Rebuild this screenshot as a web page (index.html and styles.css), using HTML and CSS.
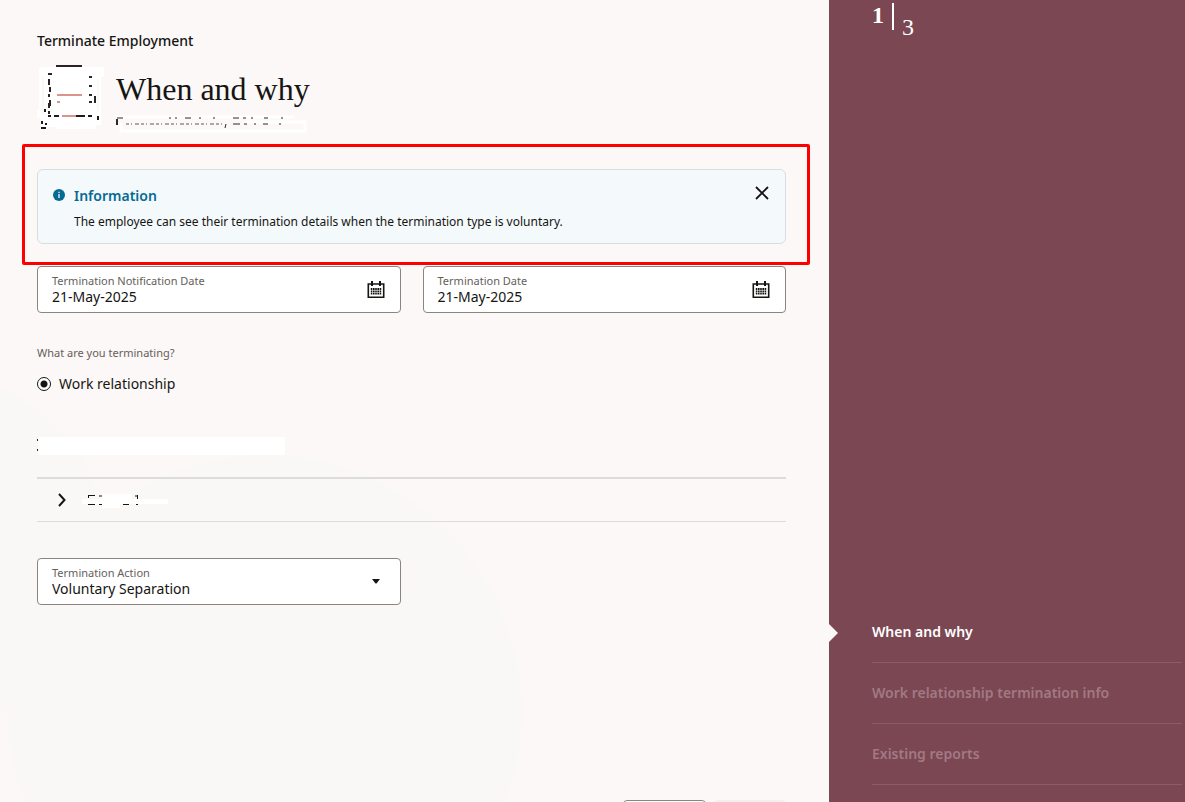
FILE: index.html
```html
<!DOCTYPE html>
<html lang="en">
<head>
  <meta charset="UTF-8">
  <meta name="viewport" content="width=device-width, initial-scale=1">
  <title>Terminate Employment</title>
  <link rel="stylesheet" href="styles.css">
</head>
<body>
  <div class="app">
    <main class="main">
      <header class="header">
        <p class="flow-name">Terminate Employment</p>
        <div class="title-row">
          <svg class="avatar" width="70" height="66" viewBox="0 0 70 66" aria-hidden="true">
            <path fill="#fff" d="M4 2h63v10h-3v48h-5v4H19v-2H4v-9H0v-8h2V4z"/>
            <path stroke="#fcf8f7" stroke-width="2" d="M6 12v38M61 14v32"/>
            <path stroke="#2b2426" stroke-width="2" d="M19 1h26"/>
            <path stroke="#2b2426" stroke-width="2" d="M11 9h4M12 14v6M13 22v5M12 29v3M13 35v6M12 38v5M12 46v3"/>
            <path stroke="#2b2426" stroke-width="2" d="M52 12h3M52 21h3M52 30h3M52 37h3M58 31v7"/>
            <path stroke="#d9958a" stroke-width="2" d="M20 30h25M20 37h3"/>
            <path stroke="#1f191b" stroke-width="2" d="M11 51h3M17 51h5"/>
            <path stroke="#d9958a" stroke-width="2" d="M25 51h14"/>
            <path stroke="#1f191b" stroke-width="2" d="M39 51h9M51 51h4M61 51v4M8 44v3M5 56v3M4 63h5M8 59h2"/>
          </svg>
          <div class="title-text">
            <h1>When and why</h1>
            <svg class="covered-name" width="192" height="20" viewBox="0 0 192 20" aria-hidden="true">
              <path fill="none" stroke="#fff" stroke-width="3" d="M0 3h178M5 9v8h184V8h-60"/>
              <path stroke="#2b2828" stroke-width="1" d="M1 4h6M53 4h2M60 3v2M69 4h6M84 3v2M97 4h2M117 4h6M127 4h3M135 4h2M148 4h4M166 3v2"/>
              <path stroke="#2b2828" stroke-width="2" d="M1 5v6"/>
              <path stroke="#5c5859" stroke-width="1" stroke-dasharray="3 2 1 3 4 2" d="M10 10h98"/>
              <path stroke="#2b2828" stroke-width="1" d="M110 10l-1 4M117 10h7M128 10h3M138 10h2M147 10h5M163 10h2"/>
            </svg>
          </div>
        </div>
      </header>

      <div class="highlight">
        <section class="banner">
          <svg class="info-icon" width="12" height="12" viewBox="0 0 12 12" aria-hidden="true">
            <circle cx="6" cy="6" r="6" fill="#066b93"/>
            <path stroke="#f4f9fc" stroke-width="1.3" d="M6 5v4M6 2.7v1.4"/>
          </svg>
          <div class="banner-body">
            <h2>Information</h2>
            <p>The employee can see their termination details when the termination type is voluntary.</p>
          </div>
          <button type="button" class="close" aria-label="Close">
            <svg width="14" height="14" viewBox="0 0 14 14">
              <path fill="none" stroke="#161513" stroke-width="1.8" d="M1 1l12 12M13 1L1 13"/>
            </svg>
          </button>
        </section>
      </div>

      <form class="form">
        <div class="fields">
          <div class="field">
            <div class="field-text">
              <label for="notify">Termination Notification Date</label>
              <input id="notify" type="text" value="21-May-2025">
            </div>
            <button type="button" class="calendar" aria-label="Select date">
              <svg width="18" height="18" viewBox="0 0 18 18">
                <path fill="none" stroke="#161513" stroke-width="1.6" d="M1.3 3h15.4v13.2H1.3z"/>
                <path stroke="#161513" stroke-width="2" d="M5 0v5M13 0v5"/>
                <path stroke="#161513" stroke-width="1.8" stroke-dasharray="1.6 .6" d="M3.8 8h10.6M3.8 10.3h10.6M3.8 12.6h10.6"/>
              </svg>
            </button>
          </div>
          <div class="field">
            <div class="field-text">
              <label for="end">Termination Date</label>
              <input id="end" type="text" value="21-May-2025">
            </div>
            <button type="button" class="calendar" aria-label="Select date">
              <svg width="18" height="18" viewBox="0 0 18 18">
                <path fill="none" stroke="#161513" stroke-width="1.6" d="M1.3 3h15.4v13.2H1.3z"/>
                <path stroke="#161513" stroke-width="2" d="M5 0v5M13 0v5"/>
                <path stroke="#161513" stroke-width="1.8" stroke-dasharray="1.6 .6" d="M3.8 8h10.6M3.8 10.3h10.6M3.8 12.6h10.6"/>
              </svg>
            </button>
          </div>
        </div>

        <fieldset class="choice">
          <legend>What are you terminating?</legend>
          <input type="radio" id="work" name="target" checked>
          <label for="work">Work relationship</label>
        </fieldset>

        <svg class="covered-heading" width="250" height="18" viewBox="0 0 250 18" aria-hidden="true">
          <path stroke="#2b2828" stroke-width="2" d="M1 2v2M1 12v2"/>
          <rect x="1" width="247" height="18" rx="2" fill="#fff"/>
        </svg>

        <div class="row">
          <button type="button" class="expand" aria-label="Expand">
            <svg width="8" height="14" viewBox="0 0 8 14">
              <path fill="none" stroke="#161513" stroke-width="2" d="M1 1l5.500 6L1 13"/>
            </svg>
          </button>
          <svg width="86" height="16" viewBox="0 0 86 16" aria-hidden="true">
            <path fill="#fff" d="M2 7h18V2h30v5h34a2 2 0 0 1 0 5H38v4H20v-4H2a2 2 0 0 1 0-5z"/>
            <path stroke="#161513" stroke-width="1" d="M6 3.500h7M6.500 3v3M17 4h3M53 4h3M55.500 3v4M6 12.500h7M17 12.500h3M41 12.500h6M54 12.500h2"/>
          </svg>
        </div>

        <div class="fields">
          <div class="field">
            <div class="field-text">
              <label for="action">Termination Action</label>
              <select id="action">
                <option>Voluntary Separation</option>
              </select>
            </div>
            <svg class="caret" width="8" height="5" viewBox="0 0 8 5" aria-hidden="true">
              <path fill="#161513" d="M0 0h8L4.500 4.500h-1z"/>
            </svg>
          </div>
        </div>

        <div class="actions">
          <button type="button" class="btn"></button>
          <button type="button" class="btn btn-disabled" disabled></button>
        </div>
      </form>
    </main>

    <aside class="sidebar">
      <div class="counter">
        <span class="current">1</span>
        <span class="bar"></span>
        <span class="total">3</span>
      </div>
      <ol class="steps">
        <li class="active">When and why</li>
        <li>Work relationship termination info</li>
        <li>Existing reports</li>
      </ol>
    </aside>
  </div>
</body>
</html>
```
FILE: styles.css
```css
* {
  box-sizing: border-box;
}
body {
  margin: 0;
  font-family: "Noto Sans", sans-serif;
  font-size: 14px;
  line-height: 20px;
  color: #161513;
}
h1, h2, p {
  margin: 0;
}
button, input, select {
  font: inherit;
  color: inherit;
}
svg {
  display: block;
  flex: none;
}
.app {
  display: grid;
  grid-template-columns: 1fr 356px;
  height: 100vh;
  overflow: hidden;
}
.main {
  padding: 31px 19px 0 22px;
  min-width: 0;
  overflow: hidden;
  background:
    radial-gradient(circle at 265px 712px, #faf8f6 255px, transparent 262px),
    radial-gradient(circle at -70px 550px, #faf8f6 175px, transparent 182px),
    #fcf8f7;
}
.header, .form {
  padding: 0 24px 0 15px;
}
.flow-name {
  font-weight: 500;
}
.title-row {
  display: flex;
  gap: 9px;
  margin-top: 14px;
  height: 79px;
}
.title-text {
  padding-top: 4px;
}
h1 {
  font-family: "Liberation Serif", serif;
  font-size: 32px;
  line-height: 40px;
  font-weight: 400;
}
.covered-name {
  margin-top: 5px;
}

/* red outline round the message */
.highlight {
  border: 3px solid #f00;
  border-radius: 2px;
  padding: 22px 21px 18px 12px;
}
.banner {
  display: flex;
  gap: 9px;
  padding: 15px 15px 13px;
  border: 1px solid #d5dfe0;
  border-radius: 6px;
  background: #f4f9fc;
}
.info-icon {
  margin-top: 4px;
}
.banner-body {
  flex: 1;
}
h2 {
  font-size: 14px;
  line-height: 22px;
  font-weight: 600;
  color: #066b93;
}
.banner p {
  margin-top: 6px;
  font-size: 12px;
  line-height: 17px;
}
.close, .calendar, .expand {
  display: flex;
  padding: 0;
  border: 0;
  background: none;
  cursor: pointer;
}
.close {
  align-self: flex-start;
  margin: 1px 1px 0 0;
}

.form {
  padding-top: 1px;
}
.fields {
  display: grid;
  grid-template-columns: 1fr 1fr;
  gap: 22px;
}
.field {
  display: flex;
  align-items: center;
  height: 47px;
  padding: 0 15px 0 14px;
  border: 1px solid #8b8580;
  border-radius: 4px;
  background: #fff;
}
.field-text {
  flex: 1;
  display: flex;
  flex-direction: column;
}
.field-text label, legend {
  font-size: 11px;
  line-height: 14px;
  color: #65605c;
}
.field-text input, .field-text select {
  width: 100%;
  height: 18px;
  padding: 0;
  border: 0;
  line-height: 18px;
  background: none;
  appearance: none;
  outline: none;
}
.caret {
  margin-right: 5px;
}

.choice {
  display: flex;
  align-items: center;
  gap: 8px;
  margin: 33px 0 0;
  padding: 0;
  border: 0;
}
legend {
  margin-bottom: 14px;
  padding: 0;
}
.choice input {
  appearance: none;
  width: 14px;
  height: 14px;
  margin: 0;
  border: 1px solid #161513;
  border-radius: 50%;
  background: radial-gradient(circle, #161513 3px, #fff 4px);
}
.covered-heading {
  margin: 43px 0 22px;
}
.row {
  display: flex;
  align-items: center;
  gap: 16px;
  height: 45px;
  padding-left: 21px;
  border-top: 2px solid #dedcda;
  border-bottom: 1px solid #dedcda;
  margin-bottom: 36px;
}
.actions {
  display: flex;
  justify-content: flex-end;
  gap: 8px;
  margin-top: 195px;
}
.btn {
  width: 83px;
  height: 36px;
  border: 1px solid #8b8580;
  border-radius: 4px;
  background: #fff;
}
.btn-disabled {
  width: 72px;
  border-color: #f3efee;
  background: #f3efee;
}

.sidebar {
  display: flex;
  flex-direction: column;
  justify-content: space-between;
  padding: 3px 3px 17px 43px;
  background: #7b4752;
  color: #fff;
}
.counter {
  display: flex;
  gap: 8px;
  font-family: "Liberation Serif", serif;
  font-size: 24px;
  line-height: 24px;
}
.current {
  font-weight: 700;
}
.bar {
  width: 2px;
  height: 27px;
  background: #fff;
}
.total {
  padding-top: 12px;
}
.steps {
  margin: 0;
  padding: 0;
  list-style: none;
  font-weight: 600;
}
.steps li {
  position: relative;
  height: 61px;
  line-height: 60px;
  border-bottom: 1px solid #8d5c67;
  color: #a27984;
}
.steps .active {
  color: #fff;
}
/* pointer from the form to the current step */
.steps .active::before {
  content: '';
  position: absolute;
  left: -43px;
  top: 22px;
  border: 9px solid transparent;
  border-left-color: #fcf8f7;
  border-right-width: 0;
}
```
